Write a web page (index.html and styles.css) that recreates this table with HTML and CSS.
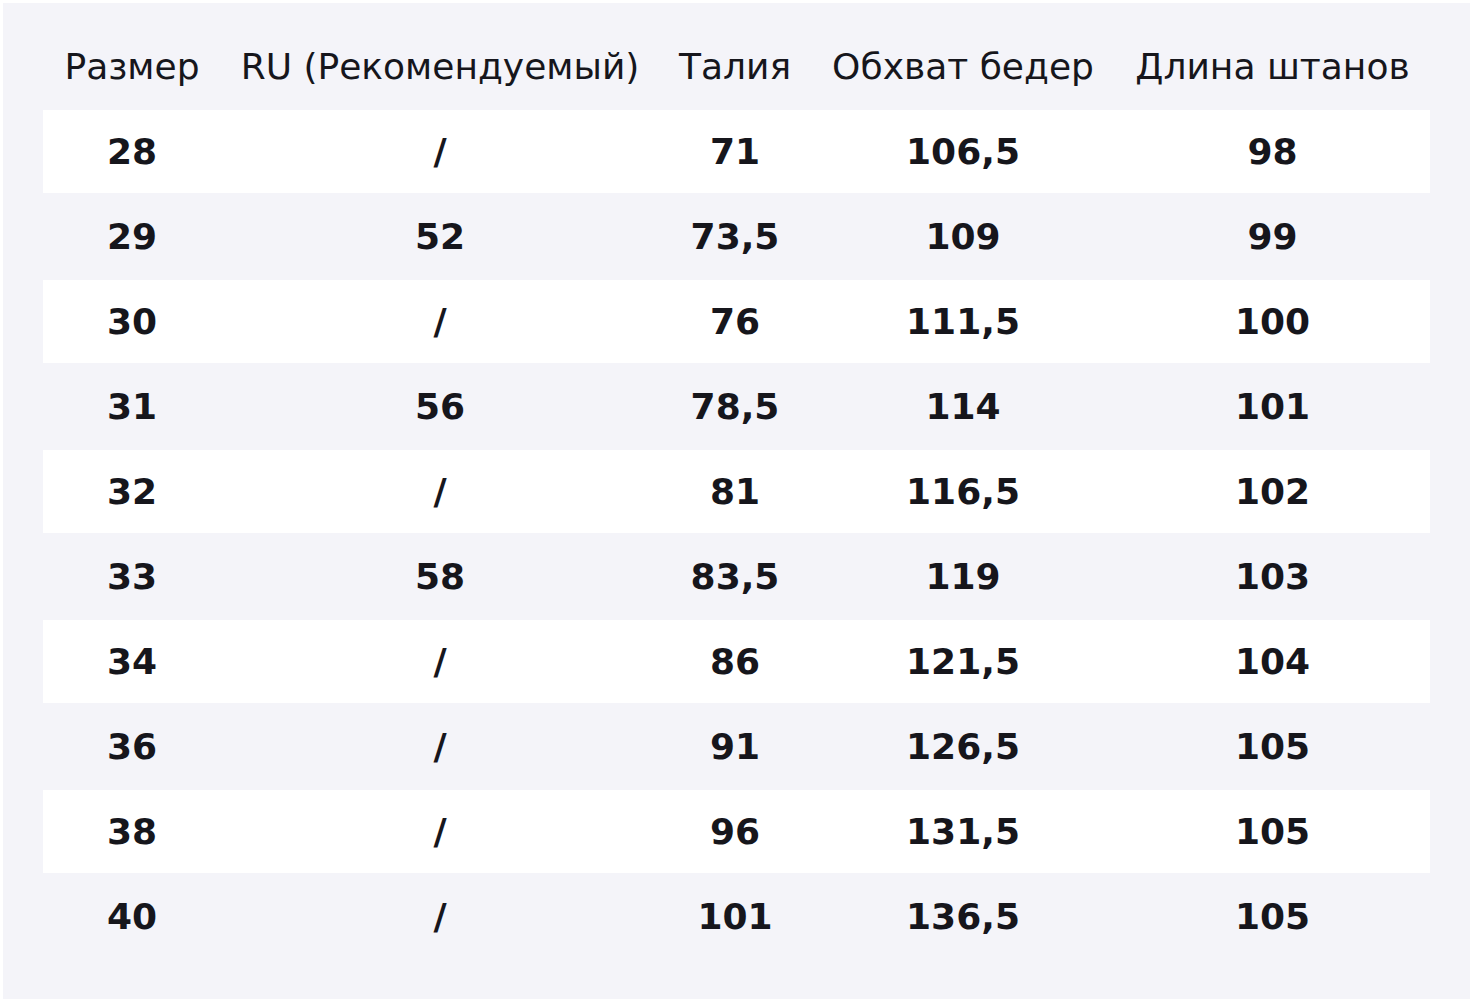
FILE: index.html
```html
<!DOCTYPE html>
<html lang="ru">
<head>
<meta charset="utf-8">
<title>Таблица размеров</title>
<link rel="stylesheet" href="styles.css">
</head>
<body>
<div class="panel">
  <table class="sizes">
    <colgroup>
      <col class="c1"><col class="c2"><col class="c3"><col class="c4"><col class="c5">
    </colgroup>
    <thead>
      <tr><th>Размер</th><th>RU (Рекомендуемый)</th><th>Талия</th><th>Обхват бедер</th><th>Длина штанов</th></tr>
    </thead>
    <tbody>
      <tr><td>28</td><td>/</td><td>71</td><td>106,5</td><td>98</td></tr>
      <tr><td>29</td><td>52</td><td>73,5</td><td>109</td><td>99</td></tr>
      <tr><td>30</td><td>/</td><td>76</td><td>111,5</td><td>100</td></tr>
      <tr><td>31</td><td>56</td><td>78,5</td><td>114</td><td>101</td></tr>
      <tr><td>32</td><td>/</td><td>81</td><td>116,5</td><td>102</td></tr>
      <tr><td>33</td><td>58</td><td>83,5</td><td>119</td><td>103</td></tr>
      <tr><td>34</td><td>/</td><td>86</td><td>121,5</td><td>104</td></tr>
      <tr><td>36</td><td>/</td><td>91</td><td>126,5</td><td>105</td></tr>
      <tr><td>38</td><td>/</td><td>96</td><td>131,5</td><td>105</td></tr>
      <tr><td>40</td><td>/</td><td>101</td><td>136,5</td><td>105</td></tr>
    </tbody>
  </table>
</div>
</body>
</html>
```
FILE: styles.css
```css
html, body {
  margin: 0;
  padding: 0;
  background: #ffffff;
}
body {
  padding: 3px;
  font-family: "DejaVu Sans", Verdana, sans-serif;
  color: #16161c;
}
.panel {
  box-sizing: border-box;
  width: 1467px;
  height: 996px;
  padding: 21px 40px 0 40px;
  background: #f4f4f9;
}
.sizes {
  table-layout: fixed;
  width: 1387px;
  border-collapse: separate;
  border-spacing: 0;
}
.c1 { width: 178px; }
.c2 { width: 438px; }
.c3 { width: 152px; }
.c4 { width: 304px; }
.c5 { width: 315px; }
.sizes th,
.sizes td {
  box-sizing: border-box;
  height: 85px;
  padding: 0;
  text-align: center;
  vertical-align: middle;
  font-size: 36px;
  line-height: 1;
  white-space: nowrap;
  border-top: 1px solid #f4f4f9;
  border-bottom: 1px solid #f4f4f9;
  background-clip: padding-box;
}
.sizes th {
  font-weight: normal;
}
.sizes td {
  font-weight: bold;
}
.sizes tbody tr:nth-child(odd) td {
  background-color: #ffffff;
}
```
